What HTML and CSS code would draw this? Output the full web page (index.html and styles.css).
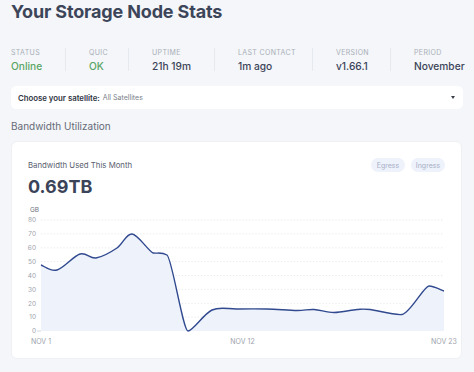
FILE: index.html
```html
<!DOCTYPE html>
<html lang="en">
<head>
<meta charset="utf-8">
<title>Your Storage Node Stats</title>
<link rel="stylesheet" href="styles.css">
</head>
<body>
<main class="page">
  <h1 class="title">Your Storage Node Stats</h1>

  <section class="stats">
    <div class="stat">
      <div class="stat-label">STATUS</div>
      <div class="stat-value ok">Online</div>
    </div>
    <div class="stat">
      <div class="stat-label">QUIC</div>
      <div class="stat-value ok">OK</div>
    </div>
    <div class="stat">
      <div class="stat-label">UPTIME</div>
      <div class="stat-value">21h 19m</div>
    </div>
    <div class="stat">
      <div class="stat-label">LAST CONTACT</div>
      <div class="stat-value">1m ago</div>
    </div>
    <div class="stat">
      <div class="stat-label">VERSION</div>
      <div class="stat-value">v1.66.1</div>
    </div>
    <div class="stat">
      <div class="stat-label">PERIOD</div>
      <div class="stat-value">November</div>
    </div>
  </section>

  <div class="select">
    <span class="select-label">Choose your satellite:</span>
    <span class="select-value">All Satellites</span>
    <span class="caret"></span>
  </div>

  <h2 class="section-title">Bandwidth Utilization</h2>

  <section class="card">
    <div class="card-head">
      <span class="card-title">Bandwidth Used This Month</span>
      <div class="pills">
        <span class="pill">Egress</span>
        <span class="pill">Ingress</span>
      </div>
    </div>
    <div class="big">0.69TB</div>
    <svg class="chart" width="418" height="146" viewBox="0 0 418 146">
      <g class="grid">
        <line x1="13" y1="17" x2="416" y2="17"/>
        <line x1="13" y1="30.9" x2="416" y2="30.9"/>
        <line x1="13" y1="44.8" x2="416" y2="44.8"/>
        <line x1="13" y1="58.6" x2="416" y2="58.6"/>
        <line x1="13" y1="72.5" x2="416" y2="72.5"/>
        <line x1="13" y1="86.4" x2="416" y2="86.4"/>
        <line x1="13" y1="100.3" x2="416" y2="100.3"/>
        <line x1="13" y1="114.1" x2="416" y2="114.1"/>
      </g>
      <line class="tick" x1="9" y1="128" x2="13" y2="128"/>
      <text class="unit" x="2" y="9">GB</text>
      <g class="ylab">
        <text x="8" y="19.3">80</text>
        <text x="8" y="33.2">70</text>
        <text x="8" y="47.1">60</text>
        <text x="8" y="60.9">50</text>
        <text x="8" y="74.8">40</text>
        <text x="8" y="88.7">30</text>
        <text x="8" y="102.6">20</text>
        <text x="8" y="116.4">10</text>
        <text x="8" y="130.3">0</text>
      </g>
      <path class="area" d="M13,62 C15.67,62.83 22.5,68.83 29,67 C35.5,65.17 45.5,53 52,51 C58.5,49 61.83,56 68,55 C74.17,54 83,49 89,45 C95,41 98,30.5 104,31 C110,31.5 119.17,46.5 125,50 C130,50.5 134,49 139,52 C144,55 155,128 160,128 C165,128 175.83,110.67 184,107 C192.17,103.33 199.83,106.17 209,106 C218.17,105.83 229,105.75 239,106 C249,106.25 261.17,107.42 269,107.5 C276.83,107.58 279.83,106.17 286,106.5 C292.17,106.83 298.83,109.5 306,109.5 C313.17,109.5 323,107 329,106.5 C335,106 334.5,105.67 342,106.5 C349.5,107.33 366,112.5 374,111.5 C382,110.5 396,83 401,83 C406,83 413.5,87.17 416,88 L416,128 L13,128 Z"/>
      <path class="line" d="M13,62 C15.67,62.83 22.5,68.83 29,67 C35.5,65.17 45.5,53 52,51 C58.5,49 61.83,56 68,55 C74.17,54 83,49 89,45 C95,41 98,30.5 104,31 C110,31.5 119.17,46.5 125,50 C130,50.5 134,49 139,52 C144,55 155,128 160,128 C165,128 175.83,110.67 184,107 C192.17,103.33 199.83,106.17 209,106 C218.17,105.83 229,105.75 239,106 C249,106.25 261.17,107.42 269,107.5 C276.83,107.58 279.83,106.17 286,106.5 C292.17,106.83 298.83,109.5 306,109.5 C313.17,109.5 323,107 329,106.5 C335,106 334.5,105.67 342,106.5 C349.5,107.33 366,112.5 374,111.5 C382,110.5 396,83 401,83 C406,83 413.5,87.17 416,88"/>
      <g class="xlab">
        <text x="13" y="141">NOV 1</text>
        <text x="214.5" y="141">NOV 12</text>
        <text x="416" y="141">NOV 23</text>
      </g>
    </svg>
  </section>
</main>
</body>
</html>
```

FILE: styles.css
```css
* { box-sizing: border-box; }

html, body {
  margin: 0;
  padding: 0;
  background: #f4f6f9;
}

body {
  font-family: Inter, "Noto Sans", "Liberation Sans", sans-serif;
  color: #3b4358;
  overflow: hidden;
}

.page {
  padding: 0 11px 0 11px;
  width: 474px;
}

.title {
  margin: 0;
  padding-top: 1px;
  font-size: 18px;
  line-height: 22px;
  font-weight: 700;
  color: #3d4559;
  letter-spacing: -0.15px;
}

.stats {
  display: grid;
  grid-template-columns: 54px 63px 86px 98px 78px auto;
  margin-top: 25px;
}

.stat {
  padding-left: 23px;
  border-left: 1px solid #e6e9ee;
  height: 23px;
}

.stat:first-child {
  padding-left: 0;
  border-left: none;
}

.stat-label {
  font-size: 7px;
  line-height: 9px;
  color: #a9aeb8;
  letter-spacing: 0.35px;
}

.stat-value {
  font-size: 10.2px;
  line-height: 13px;
  font-weight: 500;
  color: #3b4358;
  margin-top: 3px;
}

.stat-value.ok {
  color: #5aa566;
}

.select {
  margin-top: 15px;
  height: 23px;
  background: #ffffff;
  border-radius: 5px;
  display: flex;
  align-items: center;
  padding: 0 7px;
  font-size: 7.8px;
}

.select-label {
  font-weight: 600;
  color: #2f3542;
}

.select-value {
  margin-left: 3px;
  font-size: 7px;
  color: #7a7f8a;
}

.caret {
  margin-left: auto;
  margin-right: 1px;
  width: 0;
  height: 0;
  border-left: 2.5px solid transparent;
  border-right: 2.5px solid transparent;
  border-top: 3px solid #3a3f4a;
}

.section-title {
  margin: 11px 0 0 0;
  font-size: 10px;
  line-height: 13px;
  font-weight: 400;
  color: #666b78;
}

.card {
  margin-top: 8px;
  width: 451px;
  height: 218px;
  background: #ffffff;
  border-radius: 6px;
  border: 1px solid #eef0f4;
  padding: 16px 16px 0 16px;
}

.card-head {
  display: flex;
  align-items: center;
  justify-content: space-between;
  height: 14px;
}

.card-title {
  font-size: 7.8px;
  color: #5b6170;
}

.pills {
  display: flex;
  gap: 6px;
}

.pill {
  width: 34px;
  height: 14px;
  border-radius: 7px;
  background: #eef2fb;
  color: #a7afc6;
  font-size: 7px;
  display: flex;
  align-items: center;
  justify-content: center;
}

.big {
  margin-top: 4px;
  font-size: 18px;
  line-height: 22px;
  font-weight: 700;
  color: #3b4358;
}

.chart {
  display: block;
  margin-top: 5px;
  overflow: visible;
  font-family: Inter, "Noto Sans", "Liberation Sans", sans-serif;
}

.grid line {
  stroke: #dfe2e8;
  stroke-width: 0.8;
  stroke-dasharray: 1.2 2;
}

.tick {
  stroke: #c9cdd4;
  stroke-width: 0.8;
}

.unit {
  font-size: 6.5px;
  fill: #6e7380;
}

.ylab text {
  font-size: 6.5px;
  fill: #9ea3ad;
  text-anchor: end;
}

.xlab text {
  font-size: 7px;
  fill: #9ea3ad;
  text-anchor: middle;
}

.area {
  fill: #eef2fa;
  stroke: none;
}

.line {
  fill: none;
  stroke: #30498f;
  stroke-width: 1.4;
}
```
